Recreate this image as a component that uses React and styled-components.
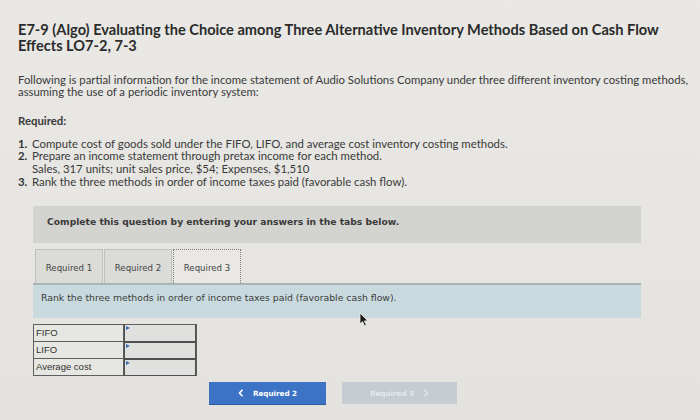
import React from "react";
import styled, { createGlobalStyle } from "styled-components";

const GlobalStyle = createGlobalStyle`
  html, body { margin: 0; padding: 0; }
  body {
    background: #e8e7e3;
    font-family: Lato, "Open Sans", sans-serif;
    color: #333;
  }
`;

const Page = styled.div`
  position: relative;
  width: 700px;
  height: 420px;
  box-sizing: border-box;
  padding: 22px 12px 0 18px;
  background: linear-gradient(180deg, #e9e8e5 0%, #e6e5e1 60%, #e3e2de 100%);
  overflow: hidden;
`;

const Title = styled.h1`
  margin: 0;
  font-family: Lato, sans-serif;
  font-weight: 700;
  font-size: 14.6px;
  line-height: 16px;
  color: #2b2b2b;
  white-space: nowrap;
`;

const Para = styled.p`
  margin: ${(p) => p.$mt || 0}px 0 0 0;
  font-family: Lato, sans-serif;
  font-size: 11.35px;
  line-height: 12.5px;
  color: #3a3a3a;
  white-space: nowrap;
  font-weight: ${(p) => (p.$bold ? 700 : 400)};
`;

const List = styled.ol`
  margin: 10.5px 0 0 0;
  padding: 0;
  list-style: none;
  font-family: Lato, sans-serif;
  font-size: 11.4px;
  line-height: 12.8px;
  color: #3a3a3a;
  white-space: nowrap;
`;

const Item = styled.li`
  display: grid;
  grid-template-columns: 14px 1fr;
`;

const Num = styled.span`
  font-weight: 700;
  color: #333;
`;

const Work = styled.div`
  margin: 17.5px 0 0 15px;
  width: 608px;
`;

const Banner = styled.div`
  height: 37px;
  box-sizing: border-box;
  padding: 10px 0 0 14px;
  background: #d3d3cf;
  font-family: "DejaVu Sans", Verdana, sans-serif;
  font-weight: 700;
  font-size: 9.2px;
  line-height: 12px;
  color: #3a3a3a;
`;

const Tabs = styled.div`
  display: flex;
  gap: 1px;
  margin: 6px 0 0 2px;
  height: 34px;
`;

const Tab = styled.div`
  width: 68px;
  box-sizing: border-box;
  display: flex;
  align-items: center;
  justify-content: center;
  font-family: "DejaVu Sans", Verdana, sans-serif;
  font-size: 8.6px;
  color: #444;
  background: ${(p) => (p.$active ? "#e9e8e4" : "#dbdbd7")};
  border: ${(p) => (p.$active ? "1.5px dotted #7c7c7c" : "1px solid #c0c0bc")};
  border-bottom: none;
  padding-top: 2px;
`;

const Panel = styled.div`
  height: 35px;
  box-sizing: border-box;
  background: #c9dadf;
  border-top: 2px solid #a9b4b8;
  padding: 7px 0 0 8px;
  font-family: "DejaVu Sans", Verdana, sans-serif;
  font-size: 9.3px;
  line-height: 12px;
  color: #3a3a3a;
`;

const Table = styled.div`
  margin-top: 6px;
  display: grid;
  grid-template-columns: 90px 72px;
  width: 162px;
  border: 1px solid #5e5e5e;
  border-bottom: none;
`;

const Label = styled.div`
  height: 17px;
  box-sizing: border-box;
  border-bottom: 1px solid #5e5e5e;
  border-right: 1px solid #5e5e5e;
  background: #e6e6e2;
  padding: 2px 0 0 2px;
  font-family: "Liberation Sans", Arial, sans-serif;
  font-size: 9.5px;
  line-height: 12px;
  color: #333;
`;

const Input = styled.div`
  position: relative;
  height: 17px;
  box-sizing: border-box;
  background: #e0e1de;
  border: 1.5px solid #4f4f4f;
  border-top-width: ${(p) => (p.$first ? 0 : 0.5)}px;
  border-left-width: 0.5px;
  border-right-width: 1px;
  &::before {
    content: "";
    position: absolute;
    left: 1px;
    top: 1px;
    border-left: 4px solid #3e6fb5;
    border-top: 2px solid transparent;
    border-bottom: 2px solid transparent;
  }
`;

const Buttons = styled.div`
  display: flex;
  gap: 16px;
  margin: 6px 0 0 176px;
`;

const NavButton = styled.div`
  width: ${(p) => p.$w}px;
  height: 22px;
  display: flex;
  align-items: center;
  justify-content: center;
  gap: 9px;
  font-family: "DejaVu Sans", Verdana, sans-serif;
  font-weight: 700;
  font-size: 7.2px;
  color: ${(p) => (p.$primary ? "#ffffff" : "#e4e8eb")};
  background: ${(p) => (p.$primary ? "#3c73c5" : "#c6cdd2")};
  box-shadow: ${(p) => (p.$primary ? "0 1px 0 #2c5a9c" : "none")};
`;

const Chevron = styled.svg`
  width: 6px;
  height: 8px;
  flex: none;
`;

const Cursor = styled.svg`
  position: absolute;
  left: 359px;
  top: 312px;
  width: 10px;
  height: 15px;
`;

const ChevronLeft = ({ color }) => (
  <Chevron viewBox="0 0 6 8">
    <path d="M4.5 0.8 L1.5 4 L4.5 7.2" fill="none" stroke={color} strokeWidth="1.6" />
  </Chevron>
);

const ChevronRight = ({ color }) => (
  <Chevron viewBox="0 0 6 8">
    <path d="M1.5 0.8 L4.5 4 L1.5 7.2" fill="none" stroke={color} strokeWidth="1.4" />
  </Chevron>
);

const rows = ["FIFO", "LIFO", "Average cost"];

export default function App() {
  return (
    <>
      <GlobalStyle />
      <Page>
        <Title>
          E7-9 (Algo) Evaluating the Choice among Three Alternative Inventory Methods Based on Cash Flow
          <br />
          Effects LO7-2, 7-3
        </Title>
        <Para $mt={19.5}>
          Following is partial information for the income statement of Audio Solutions Company under three different inventory costing methods,
          <br />
          assuming the use of a periodic inventory system:
        </Para>
        <Para $mt={16} $bold>Required:</Para>
        <List>
          <Item><Num>1.</Num><span>Compute cost of goods sold under the FIFO, LIFO, and average cost inventory costing methods.</span></Item>
          <Item>
            <Num>2.</Num>
            <span>
              Prepare an income statement through pretax income for each method.
              <br />
              Sales, 317 units; unit sales price, $54; Expenses, $1,510
            </span>
          </Item>
          <Item><Num>3.</Num><span>Rank the three methods in order of income taxes paid (favorable cash flow).</span></Item>
        </List>
        <Work>
          <Banner>Complete this question by entering your answers in the tabs below.</Banner>
          <Tabs>
            <Tab>Required 1</Tab>
            <Tab>Required 2</Tab>
            <Tab $active>Required 3</Tab>
          </Tabs>
          <Panel>Rank the three methods in order of income taxes paid (favorable cash flow).</Panel>
          <Table>
            {rows.map((r, i) => (
              <React.Fragment key={r}>
                <Label>{r}</Label>
                <Input $first={i === 0} />
              </React.Fragment>
            ))}
          </Table>
          <Buttons>
            <NavButton $primary $w={117}>
              <ChevronLeft color="#ffffff" />
              <span>Required 2</span>
            </NavButton>
            <NavButton $w={115}>
              <span>Required 3</span>
              <ChevronRight color="#e4e8eb" />
            </NavButton>
          </Buttons>
        </Work>
        <Cursor viewBox="0 0 10 15">
          <path d="M1 1 L1 12 L3.6 9.6 L5.6 14 L7.4 13.2 L5.4 8.9 L8.8 8.9 Z" fill="#1a1a1a" stroke="#f2f2f2" strokeWidth="0.8" />
        </Cursor>
      </Page>
    </>
  );
}
